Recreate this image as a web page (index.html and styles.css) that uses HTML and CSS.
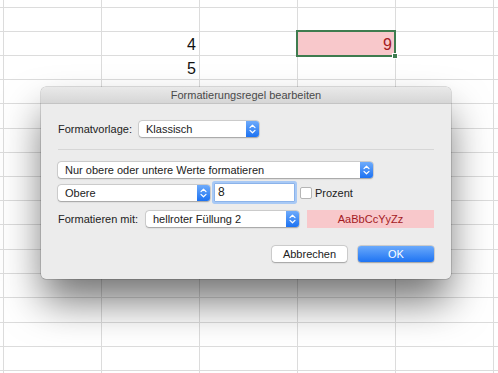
FILE: index.html
```html
<!DOCTYPE html>
<html>
<head>
<meta charset="utf-8">
<link rel="stylesheet" href="styles.css">
</head>
<body>
<div class="sheet">
  <div class="r h8"><div class="c"></div><div class="c"></div><div class="c"></div><div class="c"></div><div class="c"></div><div class="c"></div><div class="c"></div></div>
  <div class="r"><div class="c"></div><div class="c"></div><div class="c"></div><div class="c"></div><div class="c"></div><div class="c"></div><div class="c"></div></div>
  <div class="r"><div class="c"></div><div class="c"></div><div class="c num">4</div><div class="c"></div><div class="c sel"><span class="selnum">9</span><span class="selbox"><i class="handle"></i></span></div><div class="c"></div><div class="c"></div></div>
  <div class="r"><div class="c"></div><div class="c"></div><div class="c num">5</div><div class="c"></div><div class="c"></div><div class="c"></div><div class="c"></div></div>
  <div class="r"><div class="c"></div><div class="c"></div><div class="c"></div><div class="c"></div><div class="c"></div><div class="c"></div><div class="c"></div></div>
  <div class="r h25"><div class="c"></div><div class="c"></div><div class="c"></div><div class="c"></div><div class="c"></div><div class="c"></div><div class="c"></div></div>
  <div class="r"><div class="c"></div><div class="c"></div><div class="c"></div><div class="c"></div><div class="c"></div><div class="c"></div><div class="c"></div></div>
  <div class="r"><div class="c"></div><div class="c"></div><div class="c"></div><div class="c"></div><div class="c"></div><div class="c"></div><div class="c"></div></div>
  <div class="r"><div class="c"></div><div class="c"></div><div class="c"></div><div class="c"></div><div class="c"></div><div class="c"></div><div class="c"></div></div>
  <div class="r"><div class="c"></div><div class="c"></div><div class="c"></div><div class="c"></div><div class="c"></div><div class="c"></div><div class="c"></div></div>
  <div class="r h25"><div class="c"></div><div class="c"></div><div class="c"></div><div class="c"></div><div class="c"></div><div class="c"></div><div class="c"></div></div>
  <div class="r"><div class="c"></div><div class="c"></div><div class="c"></div><div class="c"></div><div class="c"></div><div class="c"></div><div class="c"></div></div>
  <div class="r"><div class="c"></div><div class="c"></div><div class="c"></div><div class="c"></div><div class="c"></div><div class="c"></div><div class="c"></div></div>
  <div class="r h25"><div class="c"></div><div class="c"></div><div class="c"></div><div class="c"></div><div class="c"></div><div class="c"></div><div class="c"></div></div>
  <div class="r"><div class="c"></div><div class="c"></div><div class="c"></div><div class="c"></div><div class="c"></div><div class="c"></div><div class="c"></div></div>
  <div class="r"><div class="c"></div><div class="c"></div><div class="c"></div><div class="c"></div><div class="c"></div><div class="c"></div><div class="c"></div></div>
  <div class="r h2"><div class="c"></div><div class="c"></div><div class="c"></div><div class="c"></div><div class="c"></div><div class="c"></div><div class="c"></div></div>
</div>

<div class="dialog">
  <div class="titlebar">Formatierungsregel bearbeiten</div>
  <div class="dbody">
    <div class="row row-style">
      <span class="label lbl-style">Formatvorlage:</span>
      <div class="popup w-style"><span class="ptext">Klassisch</span><span class="stepper"><svg width="13" height="16" viewBox="0 0 13 16"><path d="M4 6.6 L6.5 4.2 L9 6.6 M4 9.4 L6.5 11.8 L9 9.4" fill="none" stroke="#fff" stroke-width="1.2" stroke-linecap="round" stroke-linejoin="round"/></svg></span></div>
    </div>
    <div class="sep"></div>
    <div class="popup w-rule"><span class="ptext">Nur obere oder untere Werte formatieren</span><span class="stepper"><svg width="13" height="16" viewBox="0 0 13 16"><path d="M4 6.6 L6.5 4.2 L9 6.6 M4 9.4 L6.5 11.8 L9 9.4" fill="none" stroke="#fff" stroke-width="1.2" stroke-linecap="round" stroke-linejoin="round"/></svg></span></div>
    <div class="row row-top">
      <div class="popup w-top"><span class="ptext">Obere</span><span class="stepper"><svg width="13" height="16" viewBox="0 0 13 16"><path d="M4 6.6 L6.5 4.2 L9 6.6 M4 9.4 L6.5 11.8 L9 9.4" fill="none" stroke="#fff" stroke-width="1.2" stroke-linecap="round" stroke-linejoin="round"/></svg></span></div>
      <div class="field">8</div>
      <span class="check"></span>
      <span class="label">Prozent</span>
    </div>
    <div class="row row-fmt">
      <span class="label lbl-fmt">Formatieren mit:</span>
      <div class="popup w-fmt"><span class="ptext">hellroter Füllung 2</span><span class="stepper"><svg width="13" height="16" viewBox="0 0 13 16"><path d="M4 6.6 L6.5 4.2 L9 6.6 M4 9.4 L6.5 11.8 L9 9.4" fill="none" stroke="#fff" stroke-width="1.2" stroke-linecap="round" stroke-linejoin="round"/></svg></span></div>
      <div class="preview">AaBbCcYyZz</div>
    </div>
    <div class="buttons">
      <div class="btn">Abbrechen</div>
      <div class="btn ok">OK</div>
    </div>
  </div>
</div>
</body>
</html>
```

FILE: styles.css
```css
html, body {
  margin: 0;
  padding: 0;
  width: 498px;
  height: 373px;
  overflow: hidden;
  background: #fff;
  font-family: "Liberation Sans", Arial, sans-serif;
}

.sheet {
  display: flex;
  flex-direction: column;
  height: 373px;
  overflow: hidden;
}

.r {
  display: flex;
  height: 24px;
  flex: none;
  box-sizing: border-box;
  border-bottom: 1px solid #dcdcdc;
}
.r.h8 { height: 8px; }
.r.h25 { height: 25px; }
.r.h2 { height: 2px; border-bottom: 0; }

.c {
  flex: none;
  width: 98px;
  box-sizing: border-box;
  border-right: 1px solid #dcdcdc;
  display: flex;
  align-items: center;
  justify-content: flex-end;
  padding-right: 3px;
  font-size: 16px;
  color: #111;
}
.c:first-child { width: 4px; padding: 0; }
.c:last-child { width: 10px; }

.num { padding-top: 3px; }

.sel {
  position: relative;
  background: #f8c8cb;
}
.selnum {
  color: #a31a1f;
  padding-top: 3px;
}
.selbox {
  position: absolute;
  left: -2px;
  top: -2px;
  right: -1px;
  bottom: -2px;
  border: 2px solid #3f7c4f;
}
.handle {
  position: absolute;
  right: -4px;
  bottom: -4px;
  width: 4px;
  height: 4px;
  background: #3f7c4f;
  border: 1px solid #fff;
}

/* dialog */
.dialog {
  position: absolute;
  left: 41px;
  top: 87px;
  width: 410px;
  height: 192px;
  box-sizing: border-box;
  background: #ececec;
  border-radius: 5px;
  box-shadow: 0 0 0 0.5px rgba(0,0,0,0.25), 0 24px 40px -2px rgba(0,0,0,0.55);
  font-size: 11px;
  color: #222;
  overflow: hidden;
}

.titlebar {
  height: 16px;
  box-sizing: content-box;
  border-bottom: 1px solid #c4c4c4;
  background: linear-gradient(#e9e9e9, #d6d6d6);
  text-align: center;
  line-height: 17px;
  color: #4a4a4a;
  font-size: 11px;
}

.dbody {
  display: flex;
  flex-direction: column;
  padding: 17px 17px 16px 17px;
}

.row {
  display: flex;
  align-items: center;
}

.label { white-space: nowrap; }
.lbl-style { width: 81px; }
.lbl-fmt { width: 88px; }

.row-style { height: 16px; }

.popup {
  position: relative;
  height: 16px;
  box-sizing: border-box;
  background: #fff;
  border-radius: 3px;
  box-shadow: 0 0 0 0.5px rgba(0,0,0,0.18), 0 0.5px 1.5px rgba(0,0,0,0.25);
  display: flex;
  align-items: center;
  justify-content: space-between;
  flex: none;
}
.ptext {
  padding-left: 7px;
  line-height: 16px;
}
.stepper {
  width: 13px;
  height: 16px;
  border-radius: 0 3px 3px 0;
  background: linear-gradient(#6eabfb, #1c72f2);
  display: flex;
}

.w-style { width: 120px; }
.w-rule { width: 315px; margin-top: 12px; }
.w-top { width: 152px; }
.w-fmt { width: 153px; }

.sep {
  height: 1px;
  background: #d6d6d6;
  margin-top: 12px;
}

.row-top {
  height: 19px;
  margin-top: 5px;
}
.field {
  width: 81px;
  height: 19px;
  box-sizing: border-box;
  margin-left: 4px;
  background: #fff;
  border: 1px solid #8bb3ea;
  box-shadow: 0 0 0 2px #a8c9f5;
  border-radius: 1px;
  font-size: 12px;
  line-height: 17px;
  padding-left: 3px;
}
.check {
  width: 12px;
  height: 12px;
  box-sizing: border-box;
  margin-left: 5px;
  margin-right: 3px;
  background: #fff;
  border: 1px solid #b5b5b5;
  border-radius: 2px;
  flex: none;
}

.row-fmt {
  height: 18px;
  margin-top: 8px;
}
.preview {
  width: 127px;
  height: 18px;
  margin-left: 8px;
  background: #f8c8cb;
  color: #a31a1f;
  text-align: center;
  line-height: 18px;
  font-size: 11px;
}

.buttons {
  display: flex;
  justify-content: flex-end;
  gap: 11px;
  margin-top: 18px;
}
.btn {
  width: 75px;
  height: 16px;
  background: #fff;
  border-radius: 3px;
  box-shadow: 0 0 0 0.5px rgba(0,0,0,0.18), 0 0.5px 1.5px rgba(0,0,0,0.25);
  text-align: center;
  line-height: 16px;
}
.btn.ok {
  width: 76px;
  background: linear-gradient(#6aa9fb, #1f74f3);
  color: #fff;
}
```
